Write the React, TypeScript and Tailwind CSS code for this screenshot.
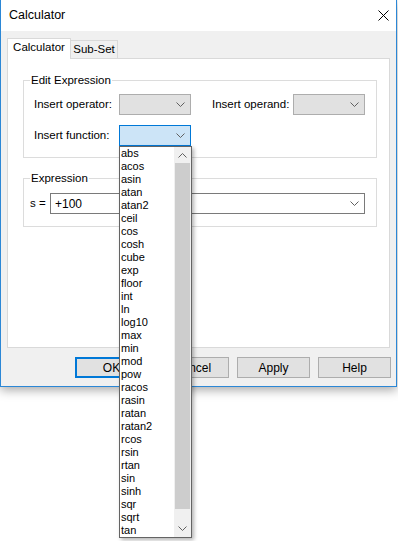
import React from 'react';

const functions = [
  'abs', 'acos', 'asin', 'atan', 'atan2', 'ceil', 'cos', 'cosh', 'cube', 'exp',
  'floor', 'int', 'ln', 'log10', 'max', 'min', 'mod', 'pow', 'racos', 'rasin',
  'ratan', 'ratan2', 'rcos', 'rsin', 'rtan', 'sin', 'sinh', 'sqr', 'sqrt', 'tan',
];

function Chevron({ up = false, color = '#606060' }: { up?: boolean; color?: string }) {
  return (
    <svg width="9" height="5" viewBox="0 0 9 5" className="shrink-0">
      <polyline
        points={up ? '0.5,4.5 4.5,0.5 8.5,4.5' : '0.5,0.5 4.5,4.5 8.5,0.5'}
        fill="none"
        stroke={color}
        strokeWidth="1"
      />
    </svg>
  );
}

function Combo({ width, variant = 'disabled', text }: { width: number; variant?: 'disabled' | 'focus' | 'edit'; text?: string }) {
  const styles = {
    disabled: 'bg-[#e1e1e1] border-[#adadad]',
    focus: 'bg-[#cce4f7] border-[#0078d7]',
    edit: 'bg-white border-[#7a7a7a]',
  }[variant];
  return (
    <div className={`h-[21px] border flex items-center pl-[4px] pr-[5px] ${styles}`} style={{ width }}>
      <span className="flex-1 text-[12px] text-black">{text}</span>
      <Chevron />
    </div>
  );
}

function Button({ label, primary = false }: { label: string; primary?: boolean }) {
  return (
    <button
      className={`w-[73px] h-[21px] bg-[#e1e1e1] text-[12px] text-black flex items-center justify-center ${
        primary ? 'border-2 border-[#0078d7]' : 'border border-[#adadad]'
      }`}
    >
      {label}
    </button>
  );
}

export default function App() {
  return (
    <div className="relative w-[398px] h-[541px] bg-white overflow-hidden" style={{ fontFamily: '"Liberation Sans", Arial, sans-serif' }}>
      {/* window */}
      <div className="w-[397px] h-[387px] flex flex-col border-x border-b border-[#2b87d6] shadow-[0_3px_10px_rgba(0,0,0,0.35)] bg-white">
        {/* title bar */}
        <div className="h-[31px] shrink-0 flex items-center justify-between pl-[8px] pr-[7px] bg-white">
          <span className="text-[12.5px] text-black">Calculator</span>
          <svg width="11" height="11" viewBox="0 0 11 11">
            <line x1="0.5" y1="0.5" x2="10.5" y2="10.5" stroke="#000" strokeWidth="1" />
            <line x1="10.5" y1="0.5" x2="0.5" y2="10.5" stroke="#000" strokeWidth="1" />
          </svg>
        </div>

        {/* dialog body */}
        <div className="flex-1 bg-[#f0f0f0] px-[6px] pt-[7px] flex flex-col text-[11.5px] text-black">
          {/* tabs */}
          <div className="h-[20px] flex items-end">
            <div className="relative z-10 -mb-px h-[21px] w-[64px] bg-white border-x border-t border-[#d9d9d9] flex items-center justify-center pb-[2px]">
              Calculator
            </div>
            <div className="h-[18px] w-[47px] bg-[#f0f0f0] border-r border-t border-[#d9d9d9] flex items-center justify-center">
              Sub-Set
            </div>
          </div>

          {/* tab page */}
          <div className="h-[290px] bg-white border border-[#d9d9d9] pl-[15px]">
            <fieldset className="mt-[14px] w-[354px] border border-[#dcdcdc] pl-[10px] pb-[11px]">
              <legend className="ml-[-4px] px-[1px] h-[14px] leading-[14px]">Edit Expression</legend>
              <div className="flex flex-col gap-[10px] pt-[7px]">
                <div className="flex items-center">
                  <span className="w-[85px]">Insert operator:</span>
                  <Combo width={72} />
                  <span className="ml-[21px] w-[81px]">Insert operand:</span>
                  <Combo width={72} />
                </div>
                <div className="flex items-center">
                  <span className="w-[85px]">Insert function:</span>
                  <Combo width={72} variant="focus" />
                </div>
              </div>
            </fieldset>

            <fieldset className="mt-[13px] w-[354px] border border-[#dcdcdc] pl-[6px] pb-[12px]">
              <legend className="ml-0 px-[1px] h-[14px] leading-[14px]">Expression</legend>
              <div className="flex items-center pt-[8px]">
                <span className="w-[20px]">s =</span>
                <Combo width={315} variant="edit" text="+100" />
              </div>
            </fieldset>
          </div>

          {/* buttons */}
          <div className="mt-[9px] flex justify-end gap-[8px] mr-[-1px]">
            <Button label="OK" primary />
            <Button label="Cancel" />
            <Button label="Apply" />
            <Button label="Help" />
          </div>
        </div>
      </div>

      {/* open dropdown list */}
      <div className="absolute left-[119px] top-[146px] w-[73px] h-[392px] bg-white border border-[#646464] flex shadow-[2px_2px_4px_rgba(0,0,0,0.3)]">
        <div className="flex-1 flex flex-col">
          {functions.map(f => (
            <div key={f} className="h-[13px] leading-[13px] pl-[1px] text-[11px] text-black">
              {f}
            </div>
          ))}
        </div>
        <div className="w-[17px] bg-[#f0f0f0] flex flex-col items-center">
          <div className="h-[16px] flex items-center justify-center">
            <Chevron up />
          </div>
          <div className="w-[15px] flex-1 bg-[#cdcdcd]" />
          <div className="h-[28px] flex items-end justify-center pb-[6px]">
            <Chevron />
          </div>
        </div>
      </div>
    </div>
  );
}
